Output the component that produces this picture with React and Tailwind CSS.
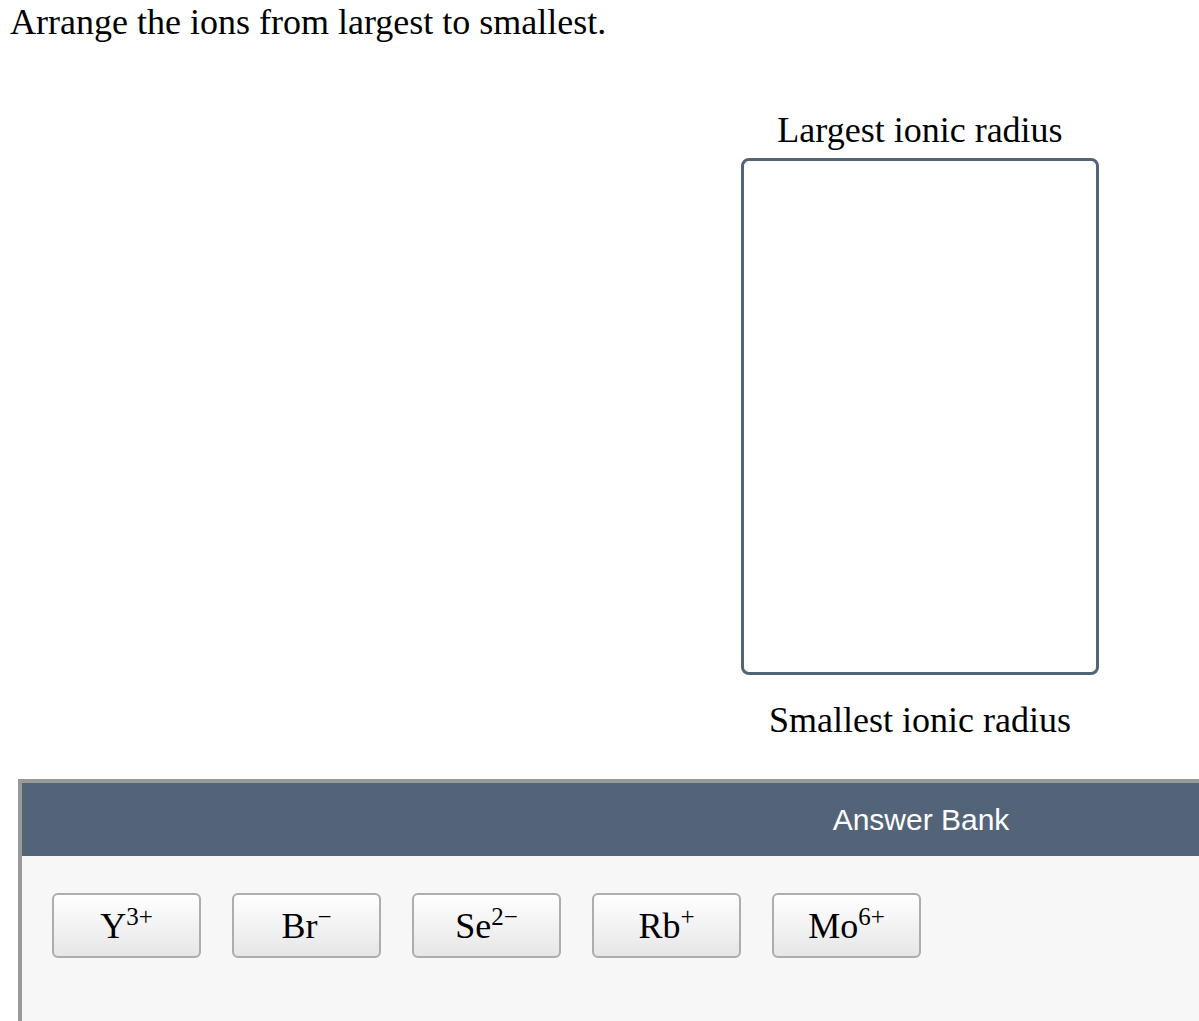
import React from 'react';

const serif = { fontFamily: '"Liberation Serif", "Times New Roman", serif' };

const ions = [
  { base: 'Y', charge: '3+' },
  { base: 'Br', charge: '\u2212' },
  { base: 'Se', charge: '2\u2212' },
  { base: 'Rb', charge: '+' },
  { base: 'Mo', charge: '6+' },
];

export default function App() {
  return (
    <div className="w-full min-h-[1021px] bg-white overflow-hidden text-black" style={serif}>
      {/* Prompt */}
      <p className="pl-[10px] pt-[2px] text-[36px] leading-[41px]">
        Arrange the ions from largest to smallest.
      </p>

      {/* Ranking box */}
      <div className="flex justify-end pr-[100px] pt-[67px]">
        <div className="flex flex-col items-center w-[358px]">
          <div className="text-[36px] leading-[41px] whitespace-nowrap">Largest ionic radius</div>
          <div className="mt-[7px] w-[358px] h-[517px] border-[3px] border-[#536479] rounded-[8px] bg-white"></div>
          <div className="mt-[25px] text-[36px] leading-[41px] whitespace-nowrap">Smallest ionic radius</div>
        </div>
      </div>

      {/* Answer bank */}
      <div className="mt-[38px] ml-[18px] w-[1802px] border-t-[4px] border-l-[4px] border-[#999999]">
        <div className="h-[73px] bg-[#536479] flex items-center justify-center">
          <span className="text-white text-[30px] leading-none" style={{ fontFamily: '"Liberation Sans", Arial, sans-serif' }}>
            Answer Bank
          </span>
        </div>
        <div className="bg-[#f7f7f7] h-[200px] pt-[37px] pl-[30px] flex gap-[31px] items-start">
          {ions.map((ion) => (
            <button
              key={ion.base}
              className="w-[149px] h-[65px] rounded-[6px] border-2 border-[#adadad] bg-gradient-to-b from-white to-[#e6e6e6] flex items-center justify-center text-[36px] leading-none"
              style={serif}
            >
              <span className="leading-none">
                {ion.base}
                <sup className="text-[25px] relative -top-[13px] align-baseline leading-none">{ion.charge}</sup>
              </span>
            </button>
          ))}
        </div>
      </div>
    </div>
  );
}
